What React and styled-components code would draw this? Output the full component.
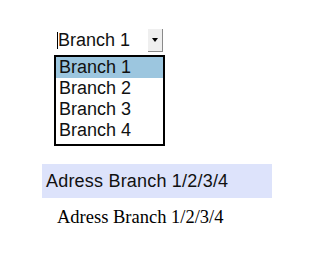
import React from 'react';
import styled, { createGlobalStyle } from 'styled-components';

const branches = ['Branch 1', 'Branch 2', 'Branch 3', 'Branch 4'];

const App = () => {
  return (
    <Page>
      <GlobalStyle />
      <SelectRow>
        <Caret />
        <Value>Branch 1</Value>
        <DropButton>
          <svg width="6" height="4" viewBox="0 0 6 4">
            <path d="M0 0 L6 0 L3 4 Z" fill="#000" />
          </svg>
        </DropButton>
      </SelectRow>
      <ListBox>
        {branches.map((b, i) => (
          <Option key={b} selected={i === 0}>{b}</Option>
        ))}
      </ListBox>
      <AddressBar>Adress Branch 1/2/3/4</AddressBar>
      <SerifLine>Adress Branch 1/2/3/4</SerifLine>
    </Page>
  );
};

export default App;

const GlobalStyle = createGlobalStyle`
  html, body {
    margin: 0;
    padding: 0;
    background: #fff;
  }
`;

const Page = styled.div`
  display: flex;
  flex-direction: column;
  align-items: flex-start;
  padding-top: 28px;
  font-family: "Liberation Sans", Arial, sans-serif;
  color: #111;
`;

const SelectRow = styled.div`
  display: flex;
  align-items: center;
  height: 24px;
  width: 106px;
  margin-left: 57px;
`;

const Caret = styled.div`
  width: 1px;
  height: 17px;
  background: #000;
`;

const Value = styled.span`
  flex: 1;
  font-size: 18px;
  line-height: 24px;
`;

const DropButton = styled.div`
  width: 14px;
  height: 22px;
  display: flex;
  align-items: center;
  justify-content: center;
  background: #efefef;
  border-right: 1px solid #8a8a8a;
  border-bottom: 1px solid #8a8a8a;
`;

const ListBox = styled.div`
  margin-top: 3px;
  margin-left: 54px;
  width: 107px;
  border: 2px solid #000;
  padding-bottom: 3px;
`;

const Option = styled.div`
  height: 21px;
  line-height: 21px;
  font-size: 18px;
  padding-left: 3px;
  background: ${props => (props.selected ? '#9cc6df' : 'transparent')};
`;

const AddressBar = styled.div`
  margin-top: 18px;
  margin-left: 42px;
  width: 226px;
  height: 34px;
  padding-left: 4px;
  display: flex;
  align-items: center;
  background: #dde3fb;
  font-size: 18px;
  letter-spacing: 0.2px;
`;

const SerifLine = styled.div`
  margin-top: 9px;
  margin-left: 57px;
  font-family: "Liberation Serif", "Times New Roman", serif;
  font-size: 18.5px;
  line-height: 20px;
  color: #000;
`;
